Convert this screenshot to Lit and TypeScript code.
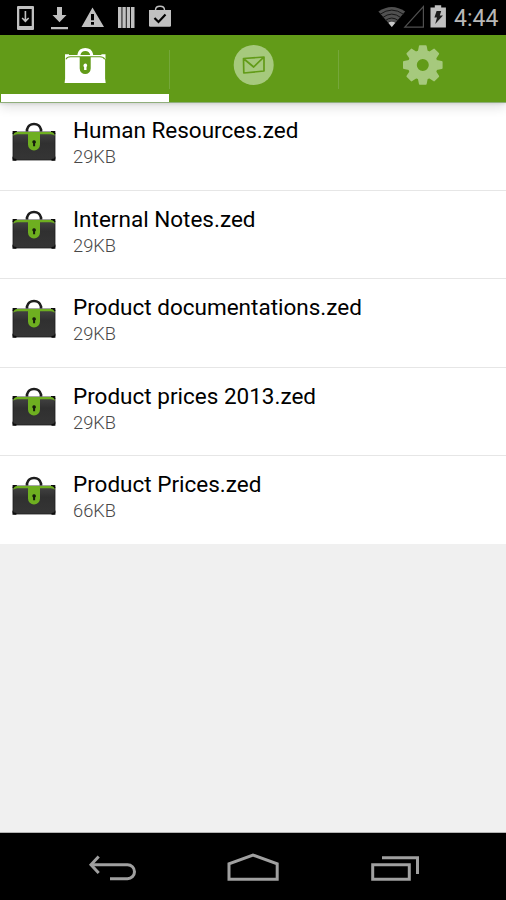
import { LitElement, html, css, svg } from "lit";
import { customElement, property } from "lit/decorators.js";

@customElement("status-bar")
class StatusBar extends LitElement {
  static styles = css`
    :host { display: flex; height: 35px; background: #000; justify-content: space-between; align-items: stretch; }
    svg { display: block; }
    .right { display: flex; padding-right: 8px; }
    .clock { width: 44px; font: 400 23px/37px Roboto, sans-serif; color: #b8b8b8; text-align: right; white-space: nowrap; }
  `;
  render() {
    return html`
      <svg width="180" height="35" viewBox="0 0 180 35" fill="#c0c0c0">
        <path fill-rule="evenodd" d="M18 6h15a1 1 0 0 1 1 1v22a1 1 0 0 1-1 1H18a1 1 0 0 1-1-1V7a1 1 0 0 1 1-1zM19.3 9v17h12.4V9z" />
        <path d="M24.6 11h1.6v8.2l2-1.8 1 1.1-3.8 3.9-3.8-3.9 1-1.1 2 1.8z" />
        <path d="M57 7h5v8h4.5l-7 7.3-7-7.3H57zM51 27h17v2.3H51z" />
        <path fill-rule="evenodd" d="M92.5 7.5 104 27H81.5zM91 14v6.2h3V14zm0 8v2.8h3V22z" />
        <path d="M118 7h3.5v21H118zM122.4 7h3.4v21h-3.4zM126.7 7h3.4v21h-3.4zM131 7h3.5v21H131z" />
        <path d="M149 10h22v15.5a1.3 1.3 0 0 1-1.3 1.3h-19.4a1.3 1.3 0 0 1-1.3-1.3z" />
        <path d="M155.5 12v-2c0-5 9-5 9 0v2" fill="none" stroke="#c0c0c0" stroke-width="1.4" />
        <path d="M154.5 18l4 4 7-7.5" fill="none" stroke="#000" stroke-width="2.2" />
      </svg>
      <div class="right">
        <svg width="76" height="35" viewBox="378 0 76 35">
          <path d="M378.4 11.5Q391.8 2.5 405.2 11.5L391.8 27z" fill="#505050" />
          <path d="M380 14.3Q391.8 5.9 403.6 14.3M382.5 17.7Q391.8 10.5 401 17.7M385 20.8Q391.8 15.3 398.5 20.8M387.5 23.6Q391.8 19.3 396 23.6" fill="none" stroke="#101010" stroke-width=".9" />
          <path d="M388.3 22.8Q391.8 20.2 395.3 22.8L391.8 27z" fill="#c9c9c9" />
          <path d="M404.8 27.2 423.4 6.5V27.2z" fill="none" stroke="#505050" stroke-width="1.2" />
          <path d="M434.8 5.3h6.4V7.5h4.7v20h-15.4V7.5h4.3z" fill="#c0c0c0" />
          <path d="M436.6 11h4.6l-1.4 4.4h3.2L435.2 24l1.8-6.4h-2.6z" fill="#1c1c1c" />
        </svg>
        <div class="clock">4:44</div>
      </div>`;
  }
}

@customElement("tab-bar")
class TabBar extends LitElement {
  static styles = css`
    :host { display: grid; grid-template-columns: 170px 169px 167px; height: 67px; background: #629b18; border-bottom: 1px solid #8fae7b; position: relative; z-index: 1; box-shadow: 0 1px 3px rgba(0,0,0,.1), 0 5px 10px rgba(0,0,0,.11); }
    .tab { background: linear-gradient(#75a73a, #75a73a) 100% 15px / 1px 39px no-repeat; }
    .tab.last { background: none; }
    .line { height: 7.5px; margin: 0 1px; background: #fff; }
    svg { display: block; }
  `;
  render() {
    const teeth = [0, 45, 90, 135, 180, 225, 270, 315];
    return html`
      <div class="tab active">
        <svg width="170" height="59" viewBox="0 35 170 59">
          <path d="M79 56v-1.6q1-5 6.3-5t6.3 5V56" fill="none" stroke="#fff" stroke-width="3" />
          <path d="M65 54.3h4v.7h32.4v-.7h4.1V59h-.4v19.5l.6 4.5H64.6l.5-4.5V59H65z" fill="#fff" />
          <path d="M66 59.2q1-2.5 4.5-2.5h29.5q3.5 0 4.7 2.5" fill="none" stroke="#629b18" stroke-width="1.1" />
          <path d="M79.7 57h11v11.5a5.5 5.5 0 0 1-11 0z" fill="#629b18" />
          <path d="M85.2 63.5a2 2 0 0 1 1.3 3.5v3h-2.4v-3a2 2 0 0 1 1.1-3.5z" fill="#fff" />
        </svg>
        <div class="line"></div>
      </div>
      <div class="tab">
        <svg width="169" height="66" viewBox="170 35 169 66">
          <circle cx="253.7" cy="65" r="20" fill="#a6c97d" />
          <path d="M243.5 58.5 264 57V71L243.8 73zM244 59l9.7 8 9.8-9.6" fill="none" stroke="#629b18" stroke-width="1.7" stroke-linejoin="round" />
        </svg>
      </div>
      <div class="tab last">
        <svg width="167" height="66" viewBox="339 35 167 66">
          <g fill="#a6c97d">
            ${teeth.map((a) => svg`<path d="M418.9 46.2q0-1 1-1h5.8q1 0 1 1l1 5h-9.8z" transform=${`rotate(${a} 422.8 65)`} />`)}
          </g>
          <circle cx="422.8" cy="65" r="10.5" fill="none" stroke="#a6c97d" stroke-width="9" />
        </svg>
      </div>`;
  }
}

@customElement("file-row")
class FileRow extends LitElement {
  @property() name = "";
  @property() size = "";
  static styles = css`
    :host { display: flex; box-sizing: border-box; height: 88.6px; border-bottom: 1px solid #e6e6e6; background: #fff; padding: 18px 0 0 12px; }
    svg { display: block; flex: none; margin-top: 1.6px; }
    .text { display: flex; flex-direction: column; margin-left: 17px; font-family: Roboto, sans-serif; white-space: nowrap; }
    .name { font-size: 22.5px; line-height: 26px; height: 26px; margin-top: -3px; color: #000; letter-spacing: 0; }
    .size { font-size: 18.3px; font-weight: 300; line-height: 22px; margin-top: 3px; color: #484848; }
  `;
  render() {
    return html`
      <svg width="44" height="40" viewBox="0 0 44 40">
        <defs><linearGradient id="g" x2="0" y2="1"><stop stop-color="#444" /><stop offset=".4" stop-color="#303030" /><stop offset="1" stop-color="#353535" /></linearGradient></defs>
        <path d="M15 9.5v-2q1.4-5.5 7-5.5t7 5.5v2" fill="none" stroke="#1d1d1d" stroke-width="2.7" />
        <rect x="1" y="10" width="42" height="28" rx="1.5" fill="url(#g)" stroke="#1c1c1c" stroke-width=".8" />
        <path d="M.6 9h4.2v3H.6zM39 9h4.3v3H39zM.5 34.2l1.3 2.2 2.6.5v1.8H.5zM43.4 34.2l-1.3 2.2-2.6.5v1.8h3.9z" fill="#0b0b0b" />
        <path d="M1.2 13.8q.6-3.8 4-3.8h33.6q3.4 0 4 3.8-1.4-1.5-4-1.5H5.2q-2.6 0-4 1.5z" fill="#6eaf20" />
        <path d="M16 10.5h12v12a6 6 0 0 1-12 0z" fill="#6eaf20" />
        <path d="M22 18.2a1.8 1.8 0 0 1 1.1 3.3v2.8h-2v-2.8a1.8 1.8 0 0 1 .9-3.3z" fill="#151c0b" />
      </svg>
      <div class="text"><div class="name">${this.name}</div><div class="size">${this.size}</div></div>`;
  }
}

@customElement("nav-bar")
class NavBar extends LitElement {
  static styles = css`
    :host { display: block; height: 67px; background: #000; border-top: 1px solid #b4b4b4; }
    svg { display: block; }
  `;
  render() {
    return html`
      <svg width="506" height="67" viewBox="0 833 506 67" fill="none" stroke="#a0a0a0" stroke-width="3">
        <path d="M91 864.7h36.5a7 7 0 0 1 0 14H110" />
        <path d="M98.7 856.5 91 864.7l7.7 8.3" />
        <path d="M229 879.2v-15.4l24-8.8 24.2 8.8v15.4z" />
        <path d="M372.7 864.7h36.6v14.5h-36.6zM382 857.8h35.5V874" />
      </svg>`;
  }
}

@customElement("app-root")
class AppRoot extends LitElement {
  static styles = css`
    :host { display: flex; flex-direction: column; height: 900px; width: 506px; background: #f0f0f0; overflow: hidden; }
    .list { flex: 1; margin-top: -1px; }
    .list file-row:last-child { border-bottom-color: #f0f0f0; }
  `;
  files = [
    ["Human Resources.zed", "29KB"],
    ["Internal Notes.zed", "29KB"],
    ["Product documentations.zed", "29KB"],
    ["Product prices 2013.zed", "29KB"],
    ["Product Prices.zed", "66KB"],
  ];
  render() {
    return html`
      <status-bar></status-bar>
      <tab-bar></tab-bar>
      <div class="list">${this.files.map(([n, s]) => html`<file-row .name=${n} .size=${s}></file-row>`)}</div>
      <nav-bar></nav-bar>`;
  }
}
